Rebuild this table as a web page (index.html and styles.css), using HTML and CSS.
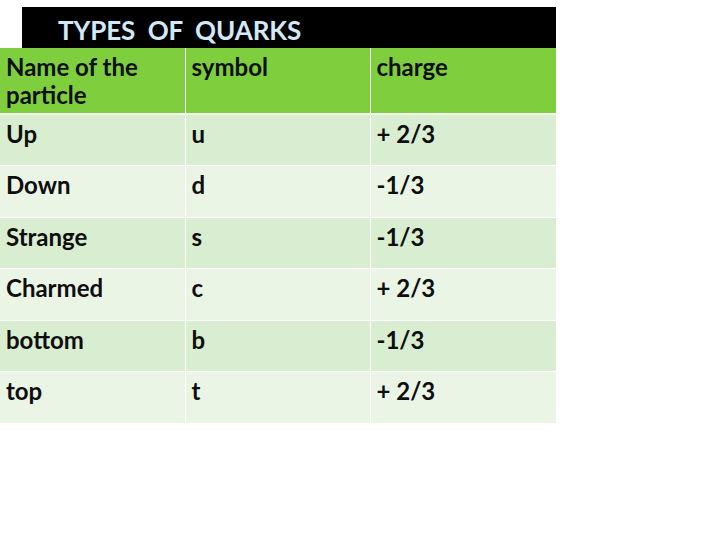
FILE: index.html
```html
<!DOCTYPE html>
<html>
<head>
<meta charset="utf-8">
<link rel="stylesheet" href="styles.css">
</head>
<body>
<div class="slide">
  <div class="titlebar"><h1 class="title">TYPES&nbsp; OF&nbsp; QUARKS</h1></div>
  <table class="quarks">
    <thead>
      <tr><th>Name of the particle</th><th>symbol</th><th>charge</th></tr>
    </thead>
    <tbody>
      <tr class="odd"><td>Up</td><td>u</td><td>+ 2/3</td></tr>
      <tr class="even"><td>Down</td><td>d</td><td>-1/3</td></tr>
      <tr class="odd"><td>Strange</td><td>s</td><td>-1/3</td></tr>
      <tr class="even"><td>Charmed</td><td>c</td><td>+ 2/3</td></tr>
      <tr class="odd"><td>bottom</td><td>b</td><td>-1/3</td></tr>
      <tr class="even"><td>top</td><td>t</td><td>+ 2/3</td></tr>
    </tbody>
  </table>
</div>
</body>
</html>
```
FILE: styles.css
```css
html, body {
  margin: 0;
  padding: 0;
  background: #ffffff;
}
.slide {
  width: 720px;
  height: 540px;
  padding-top: 7px;
  box-sizing: border-box;
  font-family: Lato, "Open Sans", sans-serif;
}
.titlebar {
  margin-left: 22px;
  width: 534px;
  height: 41px;
  background: #000000;
  box-sizing: border-box;
  padding-left: 36px;
}
.title {
  margin: 0;
  font-family: Lato, sans-serif;
  font-weight: 700;
  font-size: 26px;
  line-height: 47px;
  color: #d3e9f7;
  letter-spacing: -0.1px;
  white-space: nowrap;
}
.quarks {
  border-collapse: collapse;
  width: 556px;
  table-layout: fixed;
  font-size: 24px;
  font-weight: 700;
  color: #0e0e0e;
}
.quarks th, .quarks td {
  text-align: left;
  vertical-align: top;
  padding: 5px 6px 0 6px;
  border: 1px solid #ffffff;
  box-sizing: border-box;
}
.quarks th:nth-child(1), .quarks td:nth-child(1) { width: 185px; border-left: 0; }
.quarks th:nth-child(2), .quarks td:nth-child(2) { width: 185px; }
.quarks th:nth-child(3), .quarks td:nth-child(3) { width: 186px; border-right: 0; }
.quarks thead th {
  background: #7fce3d;
  height: 66px;
  line-height: 28px;
  border-top: 0;
  border-bottom: 2px solid #f3f9ef;
  font-weight: 700;
}
.quarks td {
  height: 51.5px;
  line-height: 28px;
}
.quarks tr.odd td { background: #d9edd0; }
.quarks tr.even td { background: #ebf5e6; }
```
